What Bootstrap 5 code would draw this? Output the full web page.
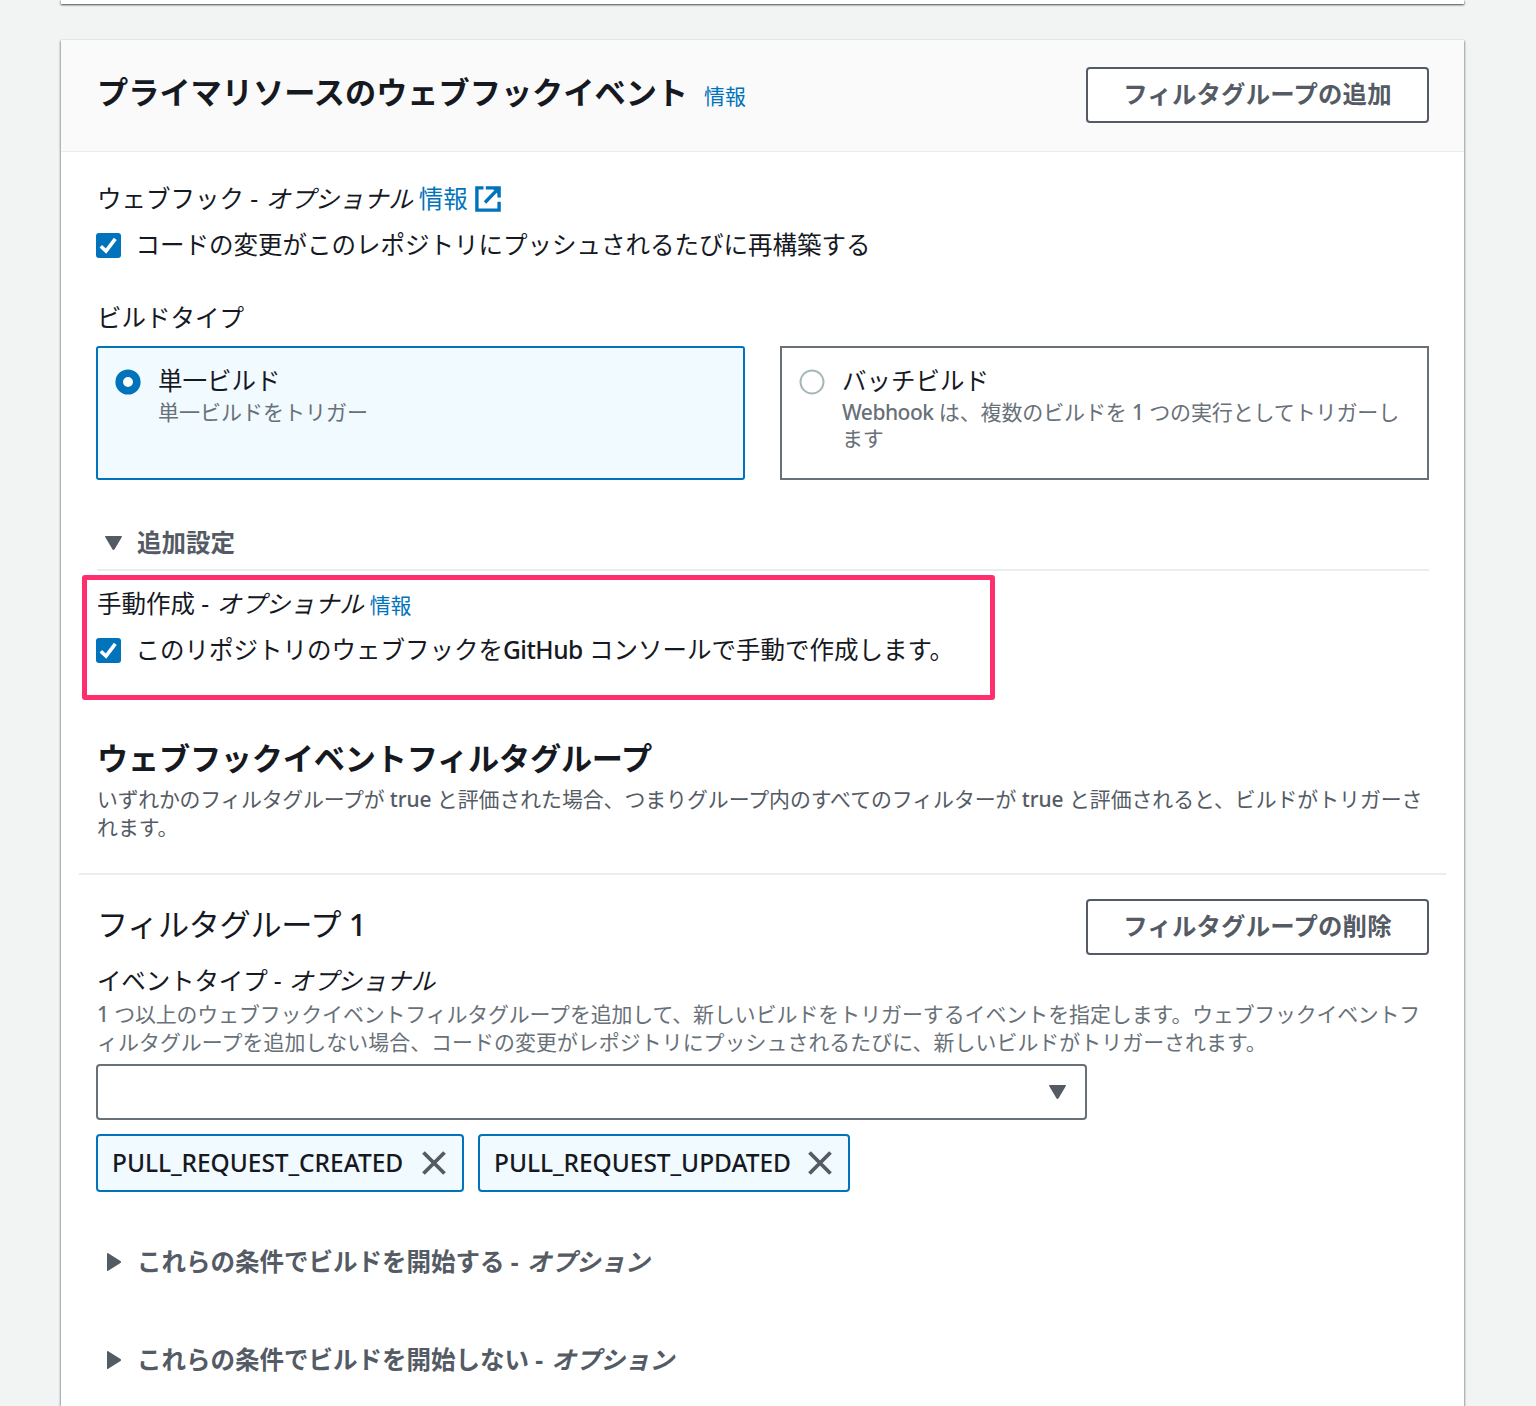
<!DOCTYPE html>
<html lang="ja">
<head>
<meta charset="utf-8">
<meta name="viewport" content="width=device-width, initial-scale=1">
<title>ウェブフックイベント</title>
<link rel="stylesheet" href="https://cdn.jsdelivr.net/npm/bootstrap@5.3.0/dist/css/bootstrap.min.css">
<style>
:root{--ink:#16191f;--slate:#545b64;--muted:#687078;--blue:#0073bb;--line:#eaeded}
body{background:#f2f3f3;color:var(--ink);font-family:"Noto Sans","Noto Sans CJK JP",sans-serif;font-size:24.5px;line-height:28px;height:1406px;overflow:hidden}
.info{color:var(--blue);text-decoration:none;margin-left:6px}
.info-sm{font-size:20.9px;line-height:24px;margin-top:3px}
i{margin-left:1px}
.page-col{width:1403px;margin-left:61px}
.panel{background:#fff;box-shadow:0 1px 2px 0 rgba(0,28,36,.5),1px 1px 2px 0 rgba(0,28,36,.2),-1px 1px 2px 0 rgba(0,28,36,.2)}
.panel-prev{height:3.5px}
.panel-main{margin-top:36.5px;height:1400px}
.panel-head{height:112px;background:#fafafa;border-bottom:1px solid var(--line);padding:27px 35px 0 36px}
.panel-content{padding:33px 35px 0}
.tx{padding-left:1px}
.ttl{font-size:31.3px;line-height:40px;font-weight:700;margin:0}
.ttl-main{font-size:31.2px;margin-top:5px}
.ttl-sub{font-size:31.2px;letter-spacing:-.22px;margin-top:74px}
.ttl-group{font-size:31.2px;letter-spacing:-.38px;font-weight:400;margin-top:5px}
.head-info{margin:17px 0 0 16px}
.btn-aws{width:343px;height:56px;border:2px solid var(--slate);border-radius:4px;background:#fff;color:var(--slate);font-size:24.4px;letter-spacing:.2px;line-height:28px;font-weight:700;padding:0 0 2px}
.row-gap{margin-top:18px}
.chk{width:25px;height:25px;margin-right:14.500px;flex:none}
.tile{width:649px;height:134px;border:2px solid var(--muted);padding:19px 17px}
.tile.on{border-color:var(--blue);background:#f1faff;border-radius:3px}
.hint{font-size:20.9px;color:var(--muted);white-space:nowrap}
.tile .hint{font-size:21px;line-height:26px;margin-top:4px}
.rad{width:26px;height:26px;margin:2px 17px 0 0;flex:none}
.expander{color:var(--slate);font-weight:700;padding-left:9px}
.expander i{margin-left:2px}
.tri{width:17px;height:18px;fill:var(--slate);margin-right:15px;flex:none}
.hl{position:absolute;left:-14px;top:-15px;width:913px;height:125px;border:5px solid #ff2e6d;border-radius:3px}
.rule{height:2px;background:var(--line);margin:32px -17px 0}
.rule-in{height:2px;background:var(--line);margin:12px 0 0 1px}
.sel{width:991px;height:56px;border:2px solid var(--muted);border-radius:4px;padding-right:19px;margin-top:8px}
.token{height:58px;border:2px solid var(--blue);border-radius:4px;background:#f1faff;padding:0 16px 1px 14px}
.en{font-weight:500}
.token .en{letter-spacing:-.05px}
.en-tight{letter-spacing:-.5px}
.k1{letter-spacing:-.25px}.k2{letter-spacing:-.05px}.k3{letter-spacing:-.2px}.k4{letter-spacing:.07px}.k5{letter-spacing:-.13px}.k6{letter-spacing:-.1px}
</style>
<script src="https://cdn.jsdelivr.net/npm/bootstrap@5.3.0/dist/js/bootstrap.bundle.min.js"></script>
</head>
<body>
<svg class="d-none">
  <symbol id="check" viewBox="0 0 25 25"><rect width="25" height="25" rx="3" fill="#0073bb"/><path d="M4.800 13.200l5.200 4.800L19.300 5.800" fill="none" stroke="#fff" stroke-width="3.600"/></symbol>
  <symbol id="down" viewBox="0 0 17 18"><path d="M.6 2h15.800q.9.3.3 1.200L9.600 15.300q-1.100 1.200-2.200 0L.3 3.200Q-.3 2.300.6 2z"/></symbol>
  <symbol id="right" viewBox="0 0 17 18"><path d="M2 .6v16.800q.3.900 1.200.3L15.500 10q1.100-1 0-2L3.200.3Q2.300-.3 2 .6z"/></symbol>
  <symbol id="close" viewBox="0 0 24 24"><path d="M1.500 1.500l21 21M22.500 1.500l-21 21" fill="none" stroke="#545b64" stroke-width="3.800"/></symbol>
</svg>
<main class="page-col">
  <div class="panel panel-prev"></div>
  <section class="panel panel-main">
    <header class="panel-head d-flex justify-content-between align-items-start">
      <div class="d-flex align-items-start"><h2 class="ttl ttl-main">プライマリソースのウェブフックイベント</h2><a class="info info-sm head-info" href="#">情報</a></div>
      <button class="btn btn-aws">フィルタグループの追加</button>
    </header>
    <div class="panel-content">
      <div class="d-flex align-items-center tx"><span>ウェブフック - <i>オプショナル</i></span><a class="info" href="#">情報</a>
        <svg width="26" height="26" style="margin-left:7px" viewBox="0 0 26 26" fill="none" stroke="#0073bb" stroke-width="3.400"><path d="M8.500 1.900H1.900v22.200h22.200V15.800M10.800 1.900h13.300V11.500M23.600 2.400L10 16.500"/><path d="M17.500 2.500h6v6z" fill="#0073bb" stroke="none"/></svg></div>
      <label class="d-flex align-items-center row-gap"><svg class="chk"><use href="#check"/></svg><span>コードの変更がこのレポジトリにプッシュされるたびに再構築する</span></label>
      <div class="tx" style="margin-top:45px">ビルドタイプ</div>
      <div class="d-flex justify-content-between" style="margin-top:14px">
        <div class="tile on d-flex">
          <svg class="rad" viewBox="0 0 26 26"><circle cx="13" cy="13" r="8.800" fill="#fff" stroke="#0073bb" stroke-width="7.600"/></svg>
          <div><div>単一ビルド</div><div class="hint">単一ビルドをトリガー</div></div>
        </div>
        <div class="tile d-flex">
          <svg class="rad" viewBox="0 0 26 26"><circle cx="13" cy="13" r="11.500" fill="#fff" stroke="#aab7b8" stroke-width="2"/></svg>
          <div><div>バッチビルド</div><div class="hint k5"><span class="en en-tight">Webhook</span> は、複数のビルドを <span class="en">1</span> つの実行としてトリガーし<br>ます</div></div>
        </div>
      </div>
      <div class="expander d-flex align-items-center" style="margin-top:49px"><svg class="tri"><use href="#down"/></svg>追加設定</div>
      <div class="rule-in"></div>
      <div class="position-relative" style="margin-top:19px">
        <div class="d-flex align-items-start tx"><span>手動作成 - <i>オプショナル</i></span><a class="info info-sm" href="#">情報</a></div>
        <label class="d-flex align-items-center row-gap"><svg class="chk"><use href="#check"/></svg><span>このリポジトリのウェブフックを<span class="en en-tight">GitHub</span> コンソールで手動で作成します。</span></label>
        <div class="hl"></div>
      </div>
      <h2 class="ttl ttl-sub tx">ウェブフックイベントフィルタグループ</h2>
      <div class="hint tx" style="margin-top:7px;color:#545b64"><span class="k1">いずれかのフィルタグループが</span> <span class="k2"><span class="en">true</span> と評価された場合、つまりグループ内のすべてのフィルターが <span class="en">true</span> と評価されると、ビルドがトリガーさ</span><br>れます。</div>
      <div class="rule"></div>
      <div class="d-flex justify-content-between align-items-start" style="margin-top:24px">
        <h3 class="ttl ttl-group tx">フィルタグループ <span class="en">1</span></h3>
        <button class="btn btn-aws">フィルタグループの削除</button>
      </div>
      <div class="tx k5" style="margin-top:12px">イベントタイプ - <i>オプショナル</i></div>
      <div class="hint tx" style="margin-top:5px"><span class="k6"><span class="en">1</span> つ以上のウェブフックイベントフィルタグループを追加して、</span>新しいビルドをトリガーするイベントを指定します。<span class="k3">ウェブフックイベントフ</span><br><span class="k4">ィルタグループを追加しない場合、コードの変更がレポジトリにプッシュされるたびに、新しいビルドがトリガーされます。</span></div>
      <div class="sel d-flex align-items-center justify-content-end"><svg class="tri me-0"><use href="#down"/></svg></div>
      <div class="d-flex" style="margin-top:14px;gap:14px">
        <div class="token d-flex align-items-center justify-content-between" style="width:368px"><span class="en">PULL_REQUEST_CREATED</span><svg width="24" height="24"><use href="#close"/></svg></div>
        <div class="token d-flex align-items-center justify-content-between" style="width:372px"><span class="en">PULL_REQUEST_UPDATED</span><svg width="24" height="24"><use href="#close"/></svg></div>
      </div>
      <div class="expander d-flex align-items-center" style="margin-top:56px"><svg class="tri"><use href="#right"/></svg><span>これらの条件でビルドを開始する - <i>オプション</i></span></div>
      <div class="expander d-flex align-items-center" style="margin-top:70px"><svg class="tri"><use href="#right"/></svg><span>これらの条件でビルドを開始しない - <i>オプション</i></span></div>
    </div>
  </section>
</main>
</body>
</html>
